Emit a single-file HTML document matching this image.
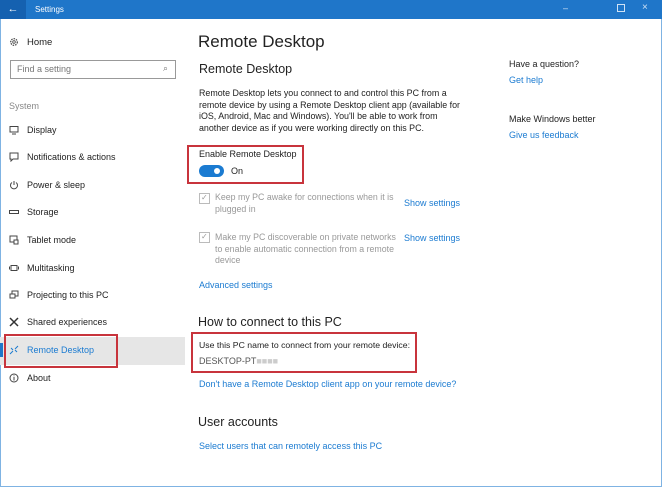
<!DOCTYPE html>
<html><head><style>
*{margin:0;padding:0;box-sizing:border-box}
body{width:662px;height:487px;overflow:hidden;background:#fff;font-family:"Liberation Sans",sans-serif;color:#222;position:relative;font-size:9px}
.a{position:absolute;white-space:nowrap}
.tb{position:absolute;left:0;top:0;width:662px;height:19px;background:#1f76c9}
.bk{position:absolute;left:0;top:0;width:26px;height:19px;background:#1561b0;color:#fff;font-size:11px;text-align:center;line-height:18px}
.win{position:absolute;left:0;top:19px;width:662px;height:468px;border:1px solid #7fb3e3;border-top:none}
.lk{color:#1b7bd1}
.g{color:#999}
.red{position:absolute;border:2px solid #c8343c}
.ic{position:absolute;left:9px;width:10px;height:10px}
.cb{position:absolute;width:11px;height:11px;border:1px solid #bbb}
</style></head><body>
<div class="tb"></div><div class="bk">&#8592;</div>
<div class="a" style="left:35px;top:5px;color:#fff;font-size:8px">Settings</div>
<div class="a" style="left:563px;top:3px;color:#cfe2f5;font-size:9px">&#8211;</div>
<div class="a" style="left:617px;top:4px;width:8px;height:8px;border:1px solid #cfe2f5"></div>
<div class="a" style="left:642px;top:2px;color:#cfe2f5;font-size:10px">&#215;</div>
<div class="win"></div>
<div class="a" style="left:0;top:337px;width:185px;height:28px;background:#e6e6e6"></div>
<div class="a" style="left:0;top:343px;width:3px;height:14px;background:#1f76c9"></div>

<svg class="ic" style="top:37px" viewBox="0 0 10 10"><circle cx="5" cy="5" r="3.3" fill="none" stroke="#444" stroke-width="1.2" stroke-dasharray="1.5 1"/><circle cx="5" cy="5" r="1.3" fill="none" stroke="#444" stroke-width=".8"/></svg>
<div class="a" style="left:27px;top:37px;font-size:9.5px">Home</div>
<div class="a" style="left:10px;top:60px;width:166px;height:19px;border:1px solid #999"></div>
<div class="a g" style="left:17px;top:64px;font-size:9px;color:#777">Find a setting</div>
<div class="a" style="left:163px;top:63px;color:#777;font-size:9px">&#8981;</div>
<div class="a g" style="left:9px;top:101px;font-size:9px;color:#888">System</div>

<svg class="ic" style="top:125px" viewBox="0 0 10 10"><rect x="1" y="1.5" width="8" height="5.5" fill="none" stroke="#444"/><path d="M3 9h4" stroke="#444"/></svg>
<div class="a" style="left:27px;top:125px">Display</div>
<svg class="ic" style="top:152px" viewBox="0 0 10 10"><path d="M1 1h8v6H4L2 9V7H1z" fill="none" stroke="#444"/></svg>
<div class="a" style="left:27px;top:152px">Notifications &amp; actions</div>
<svg class="ic" style="top:180px" viewBox="0 0 10 10"><path d="M3 2.5A3.5 3.5 0 1 0 7 2.5M5 1v4" fill="none" stroke="#444"/></svg>
<div class="a" style="left:27px;top:180px">Power &amp; sleep</div>
<svg class="ic" style="top:207px" viewBox="0 0 10 10"><rect x=".5" y="3.5" width="9" height="3" fill="none" stroke="#444"/></svg>
<div class="a" style="left:27px;top:207px">Storage</div>
<svg class="ic" style="top:235px" viewBox="0 0 10 10"><rect x="1" y="1" width="7" height="6" fill="none" stroke="#444"/><rect x="5" y="5" width="4" height="4" fill="#fff" stroke="#444"/></svg>
<div class="a" style="left:27px;top:235px">Tablet mode</div>
<svg class="ic" style="top:263px" viewBox="0 0 10 10"><rect x="2" y="2.5" width="6" height="5" fill="none" stroke="#444"/><path d="M.5 3.5v3M9.5 3.5v3" stroke="#444"/></svg>
<div class="a" style="left:27px;top:263px">Multitasking</div>
<svg class="ic" style="top:290px" viewBox="0 0 10 10"><rect x="3" y="1" width="6" height="5" fill="none" stroke="#444"/><rect x="1" y="4" width="5" height="4" fill="#fff" stroke="#444"/></svg>
<div class="a" style="left:27px;top:290px">Projecting to this PC</div>
<svg class="ic" style="top:317px" viewBox="0 0 10 10"><path d="M1 1l8 8M9 1L1 9" stroke="#333" stroke-width="1.5"/></svg>
<div class="a" style="left:27px;top:317px">Shared experiences</div>
<svg class="ic" style="top:345px" viewBox="0 0 10 10"><path d="M1 9l3-3M6 4l3-3M2 3l2 2M8 7L6 5" stroke="#1b7bd1"/></svg>
<div class="a lk" style="left:27px;top:345px">Remote Desktop</div>
<svg class="ic" style="top:373px" viewBox="0 0 10 10"><circle cx="5" cy="5" r="4" fill="none" stroke="#444"/><path d="M5 4v3.5M5 2.5v.8" stroke="#444"/></svg>
<div class="a" style="left:27px;top:373px">About</div>
<div class="red" style="left:4px;top:334px;width:114px;height:34px"></div>

<div class="a" style="left:198px;top:32px;font-size:17px">Remote Desktop</div>
<div class="a" style="left:199px;top:62px;font-size:12.5px">Remote Desktop</div>
<div class="a" style="left:199px;top:88px;line-height:11.7px;font-size:8.9px">Remote Desktop lets you connect to and control this PC from a<br>remote device by using a Remote Desktop client app (available for<br>iOS, Android, Mac and Windows). You'll be able to work from<br>another device as if you were working directly on this PC.</div>
<div class="a" style="left:199px;top:149px">Enable Remote Desktop</div>
<div class="a" style="left:199px;top:165px;width:25px;height:12px;border-radius:6px;background:#1b7bd1"></div>
<div class="a" style="left:214px;top:168px;width:6px;height:6px;border-radius:3px;background:#fff"></div>
<div class="a" style="left:231px;top:166px">On</div>
<div class="red" style="left:187px;top:145px;width:117px;height:39px"></div>

<div class="cb" style="left:199px;top:193px"></div>
<div class="a g" style="left:201px;top:193px;font-size:8px">&#10003;</div>
<div class="a g" style="left:215px;top:192px;line-height:11.5px;font-size:8.8px">Keep my PC awake for connections when it is<br>plugged in</div>
<div class="a lk" style="left:404px;top:198px">Show settings</div>
<div class="cb" style="left:199px;top:232px"></div>
<div class="a g" style="left:201px;top:232px;font-size:8px">&#10003;</div>
<div class="a g" style="left:215px;top:232px;line-height:11.5px;font-size:8.8px">Make my PC discoverable on private networks<br>to enable automatic connection from a remote<br>device</div>
<div class="a lk" style="left:404px;top:233px">Show settings</div>
<div class="a lk" style="left:199px;top:280px">Advanced settings</div>

<div class="a" style="left:198px;top:315px;font-size:12.5px">How to connect to this PC</div>
<div class="a" style="left:199px;top:340px;font-size:8.7px">Use this PC name to connect from your remote device:</div>
<div class="a" style="left:199px;top:356px;color:#555">DESKTOP-PT<span style="color:#ccc">■■■■</span></div>
<div class="red" style="left:191px;top:332px;width:226px;height:41px"></div>
<div class="a lk" style="left:199px;top:379px">Don't have a Remote Desktop client app on your remote device?</div>
<div class="a" style="left:198px;top:415px;font-size:12.5px">User accounts</div>
<div class="a lk" style="left:199px;top:441px">Select users that can remotely access this PC</div>

<div class="a" style="left:509px;top:59px">Have a question?</div>
<div class="a lk" style="left:509px;top:75px">Get help</div>
<div class="a" style="left:509px;top:114px">Make Windows better</div>
<div class="a lk" style="left:509px;top:130px">Give us feedback</div>
</body></html>
